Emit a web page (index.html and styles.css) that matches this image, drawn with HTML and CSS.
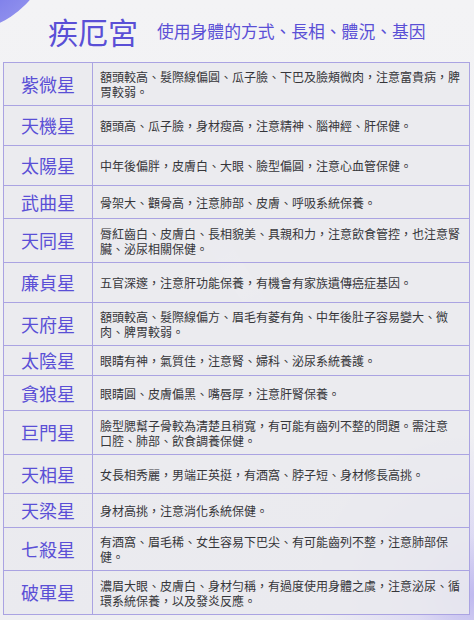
FILE: index.html
```html
<!DOCTYPE html>
<html lang="zh-Hant">
<head>
<meta charset="utf-8">
<title>疾厄宮</title>
<link rel="stylesheet" href="styles.css">
</head>
<body>
<div class="page">
  <div class="orb"></div>
  <div class="streak"></div>
  <header class="head">
    <h1 class="title">疾厄宮</h1>
    <p class="subtitle">使用身體的方式、長相、體況、基因</p>
  </header>
  <table class="stars">
    <tr class="h43"><th>紫微星</th><td>額頭較高、髮際線偏圓、瓜子臉、下巴及臉頰微肉，注意富貴病，脾胃較弱。</td></tr>
    <tr class="h40"><th>天機星</th><td>額頭高、瓜子臉，身材瘦高，注意精神、腦神經、肝保健。</td></tr>
    <tr class="h40"><th>太陽星</th><td>中年後偏胖，皮膚白、大眼、臉型偏圓，注意心血管保健。</td></tr>
    <tr class="h33"><th>武曲星</th><td>骨架大、顴骨高，注意肺部、皮膚、呼吸系統保養。</td></tr>
    <tr class="h44"><th>天同星</th><td>脣紅齒白、皮膚白、長相貌美、具親和力，注意飲食管控，也注意腎臟、泌尿相關保健。</td></tr>
    <tr class="h40"><th>廉貞星</th><td>五官深邃，注意肝功能保養，有機會有家族遺傳癌症基因。</td></tr>
    <tr class="h43"><th>天府星</th><td>額頭較高、髮際線偏方、眉毛有菱有角、中年後肚子容易變大、微肉、脾胃較弱。</td></tr>
    <tr class="h30"><th>太陰星</th><td>眼睛有神，氣質佳，注意腎、婦科、泌尿系統養護。</td></tr>
    <tr class="h35"><th>貪狼星</th><td>眼睛圓、皮膚偏黑、嘴唇厚，注意肝腎保養。</td></tr>
    <tr class="h44"><th>巨門星</th><td>臉型腮幫子骨較為清楚且稍寬，有可能有齒列不整的問題。需注意口&#8288;腔、肺部、飲食調養保健。</td></tr>
    <tr class="h39"><th>天相星</th><td>女長相秀麗，男端正英挺，有酒窩、脖子短、身材修長高挑。</td></tr>
    <tr class="h34"><th>天梁星</th><td>身材高挑，注意消化系統保健。</td></tr>
    <tr class="h43"><th>七殺星</th><td>有酒窩、眉毛稀、女生容易下巴尖、有可能齒列不整，注意肺部保健。</td></tr>
    <tr class="h44"><th>破軍星</th><td>濃眉大眼、皮膚白、身材勻稱，有過度使用身體之虞，注意泌尿、循環系統保養，以及發炎反應。</td></tr>
  </table>
</div>
</body>
</html>
```

FILE: styles.css
```css
* { box-sizing: border-box; }

html, body {
  margin: 0;
  padding: 0;
}

body {
  width: 474px;
  height: 620px;
  overflow: hidden;
  font-family: "Noto Sans CJK SC", "Noto Sans CJK TC", "Noto Sans", sans-serif;
  background: #f1f1f4;
}

.page {
  position: relative;
  width: 474px;
  height: 620px;
  overflow: hidden;
  background:
    radial-gradient(circle at 100% 96%, rgba(176, 168, 238, 0.75) 0, rgba(200, 194, 244, 0.45) 60px, rgba(241, 241, 244, 0) 160px),
    linear-gradient(180deg, #f3f3f5 0%, #efeff2 100%);
}

.orb {
  position: absolute;
  left: -132px;
  top: -152px;
  width: 184px;
  height: 184px;
  border-radius: 50%;
  background: radial-gradient(circle at 40% 40%, #6f70e4 0, #7f80ea 60%, #a3a3f2 100%);
}

.streak {
  position: absolute;
  left: 230px;
  top: 150px;
  width: 22px;
  height: 260px;
  transform: rotate(-32deg);
  background: linear-gradient(180deg, rgba(255,255,255,0) 0%, rgba(255,255,255,0.55) 50%, rgba(255,255,255,0) 100%);
  border-radius: 50%;
}

.head {
  position: relative;
  height: 62px;
  display: flex;
  align-items: center;
  padding-left: 48px;
  gap: 19px;
}

.title {
  margin: 0;
  font-size: 30px;
  font-weight: 400;
  line-height: 1;
  color: #5a4fd6;
}

.subtitle {
  margin: 0;
  font-size: 16.8px;
  line-height: 1;
  color: #5a4fd6;
  padding-top: 1px;
}

.stars {
  position: relative;
  margin-left: 3px;
  width: 467px;
  border-collapse: collapse;
  table-layout: fixed;
  border: 1.5px solid #a59de2;
}

.stars th,
.stars td {
  border: 1px solid #aaa3e2;
  background: rgba(233, 233, 238, 0.88);
  vertical-align: middle;
  padding: 0;
}

.stars th {
  width: 89px;
  font-size: 18px;
  font-weight: 400;
  color: #5a4fd6;
  text-align: center;
  line-height: 1;
  padding-bottom: 1px;
}

.stars td {
  font-size: 12px;
  line-height: 15px;
  color: #36363a;
  padding: 0 4px 0 7px;
}

.h30 { height: 30px; }
.h33 { height: 33px; }
.h34 { height: 34px; }
.h35 { height: 35px; }
.h39 { height: 39px; }
.h40 { height: 40px; }
.h43 { height: 43px; }
.h44 { height: 44px; }
```
